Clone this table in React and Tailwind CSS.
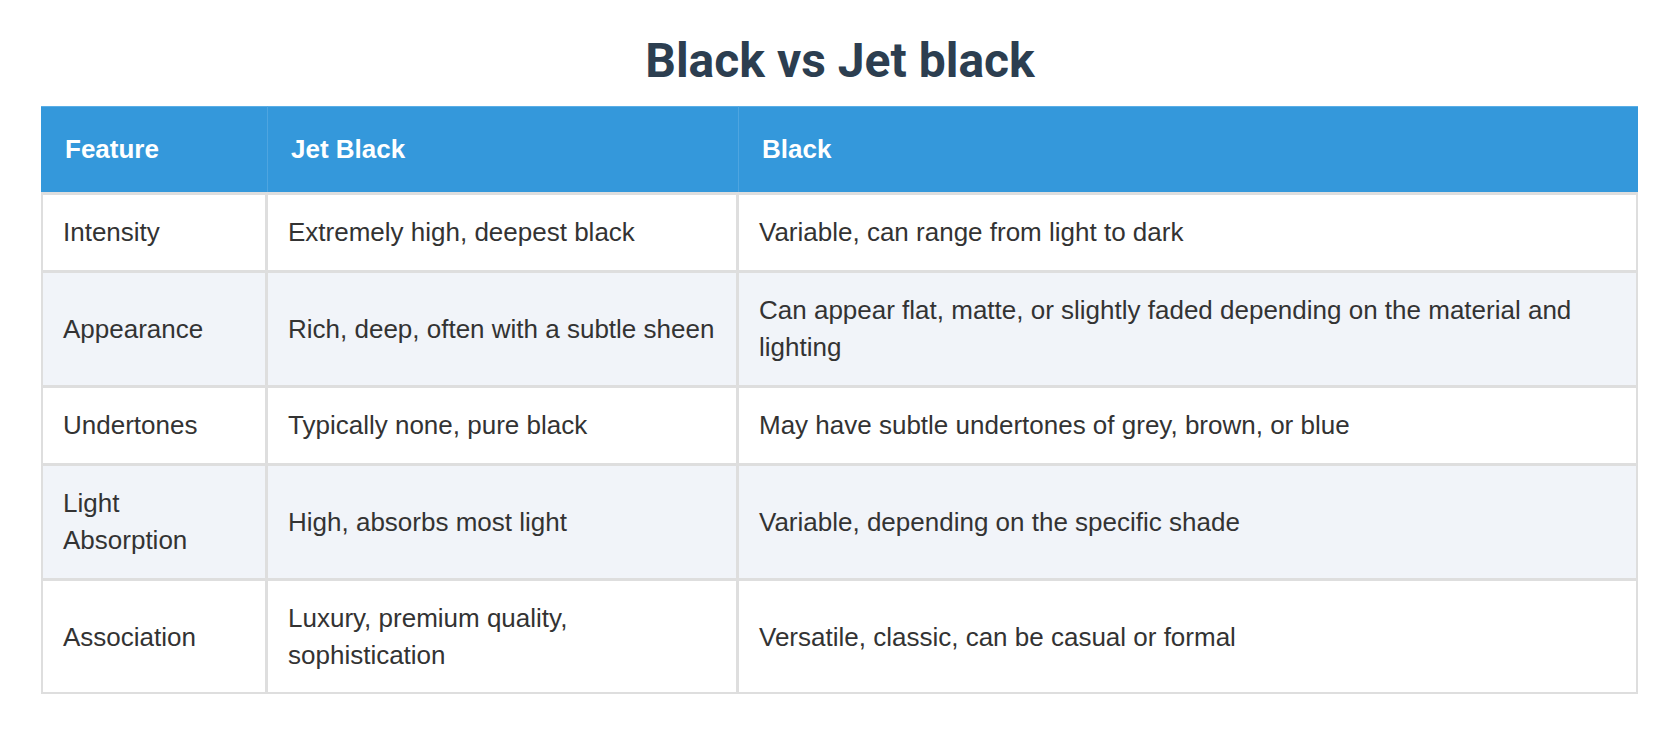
import React from "react";

const rows = [
  ["Intensity", "Extremely high, deepest black", "Variable, can range from light to dark"],
  ["Appearance", "Rich, deep, often with a subtle sheen", "Can appear flat, matte, or slightly faded depending on the material and lighting"],
  ["Undertones", "Typically none, pure black", "May have subtle undertones of grey, brown, or blue"],
  ["Light Absorption", "High, absorbs most light", "Variable, depending on the specific shade"],
  ["Association", "Luxury, premium quality, sophistication", "Versatile, classic, can be casual or formal"],
];

export default function App() {
  return (
    <div className="w-[1680px] h-[736px] bg-white overflow-hidden" style={{ fontFamily: '"Liberation Sans", Arial, sans-serif' }}>
      <h1
        className="pt-[32px] text-center text-[48px] leading-[58px] font-bold text-[#2c3e50]"
        style={{ fontFamily: 'Roboto, "Liberation Sans", sans-serif' }}
      >
        Black vs Jet black
      </h1>
      <div className="mx-[41px] mt-[16px] w-[1597px]">
        <table className="w-full border-separate border-spacing-0 table-fixed text-[26px] leading-[37px] text-[#333333]">
          <colgroup>
            <col className="w-[227px]" />
            <col className="w-[471px]" />
            <col />
          </colgroup>
          <thead>
            <tr className="bg-[#3498db] text-white font-bold text-left">
              <th className="border-t border-t-[#5aaee6] border-r border-r-[#4ea5e0] py-[24px] pl-[24px] pr-[18px] font-bold">Feature</th>
              <th className="border-t border-t-[#5aaee6] border-r border-r-[#4ea5e0] py-[24px] pl-[23px] pr-[18px] font-bold">Jet Black</th>
              <th className="border-t border-t-[#5aaee6] py-[24px] pl-[23px] pr-[22px] font-bold">Black</th>
            </tr>
          </thead>
          <tbody>
            {rows.map((r, i) => {
              const last = i === rows.length - 1;
              const pad = last ? "pt-[19px] pb-[18px]" : "py-[19px]";
              const bottom = last ? "border-b-2 border-b-[#dedede]" : "";
              return (
                <tr key={i} className={i % 2 === 1 ? "bg-[#f1f4f9]" : "bg-white"}>
                  <td className={`border-l-2 border-l-[#dedede] border-r-[3px] border-r-[#dedede] border-t-[3px] border-t-[#dedede] ${pad} pl-[20px] pr-[18px] align-middle ${bottom}`}>
                    {r[0]}
                  </td>
                  <td className={`border-r-[3px] border-r-[#dedede] border-t-[3px] border-t-[#dedede] ${pad} pl-[20px] pr-[12px] align-middle ${bottom}`}>
                    {r[1]}
                  </td>
                  <td className={`border-r-2 border-r-[#dedede] border-t-[3px] border-t-[#dedede] ${pad} pl-[20px] pr-[30px] align-middle ${bottom}`}>
                    {r[2]}
                  </td>
                </tr>
              );
            })}
          </tbody>
        </table>
      </div>
    </div>
  );
}
